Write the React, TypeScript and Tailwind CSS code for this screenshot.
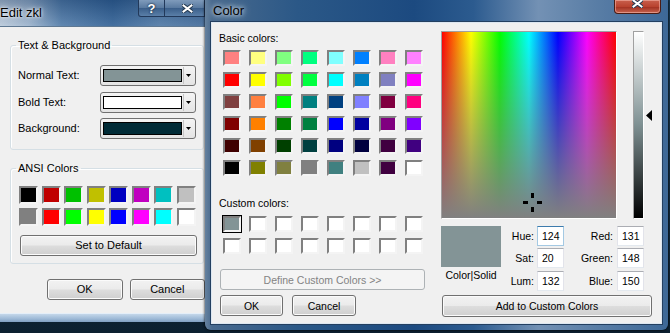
import React from 'react';

const basicColors = [
  'bg-[#ff8080]', 'bg-[#ffff80]', 'bg-[#80ff80]', 'bg-[#00ff80]', 'bg-[#80ffff]', 'bg-[#0080ff]', 'bg-[#ff80c0]', 'bg-[#ff80ff]',
  'bg-[#ff0000]', 'bg-[#ffff00]', 'bg-[#80ff00]', 'bg-[#00ff40]', 'bg-[#00ffff]', 'bg-[#0080c0]', 'bg-[#8080c0]', 'bg-[#ff00ff]',
  'bg-[#804040]', 'bg-[#ff8040]', 'bg-[#00ff00]', 'bg-[#008080]', 'bg-[#004080]', 'bg-[#8080ff]', 'bg-[#800040]', 'bg-[#ff0080]',
  'bg-[#800000]', 'bg-[#ff8000]', 'bg-[#008000]', 'bg-[#008040]', 'bg-[#0000ff]', 'bg-[#0000a0]', 'bg-[#800080]', 'bg-[#8000ff]',
  'bg-[#400000]', 'bg-[#804000]', 'bg-[#004000]', 'bg-[#004040]', 'bg-[#000080]', 'bg-[#000040]', 'bg-[#400040]', 'bg-[#400080]',
  'bg-[#000000]', 'bg-[#808000]', 'bg-[#808040]', 'bg-[#808080]', 'bg-[#408080]', 'bg-[#c0c0c0]', 'bg-[#400040]', 'bg-[#ffffff]',
];

const ansiColors = [
  'bg-[#000000]', 'bg-[#c00000]', 'bg-[#00c000]', 'bg-[#c0c000]', 'bg-[#0000c0]', 'bg-[#c000c0]', 'bg-[#00c0c0]', 'bg-[#c0c0c0]',
  'bg-[#808080]', 'bg-[#ff0000]', 'bg-[#00ff00]', 'bg-[#ffff00]', 'bg-[#0000ff]', 'bg-[#ff00ff]', 'bg-[#00ffff]', 'bg-[#ffffff]',
];

const buttonCls =
  'flex items-center justify-center rounded-[3px] border border-[#707070] bg-[linear-gradient(to_bottom,#f2f2f2_0%,#ebebeb_48%,#dddddd_52%,#cfcfcf_100%)] shadow-[inset_0_0_0_1px_#fbfbfb] text-black';

function Button({ children, className = '' }: { children: React.ReactNode; className?: string }) {
  return <div className={`${buttonCls} ${className}`}>{children}</div>;
}

// sunken colour well, classic 3D look
function Well({ color, className = '' }: { color: string; className?: string }) {
  return (
    <div
      className={`border-2 border-t-[#808080] border-l-[#808080] border-r-[#f4f4f4] border-b-[#f4f4f4] ${color} ${className}`}
    />
  );
}

function Combo({ color }: { color: string }) {
  return (
    <div className="flex h-[21px] w-[96px] items-center rounded-[3px] border border-[#707070] bg-[linear-gradient(to_bottom,#f4f4f4,#e4e4e4)] pl-[2px]">
      <div className={`h-[13px] w-[79px] border border-black ${color}`} />
      <div className="ml-[1px] h-[17px] w-px bg-[#c4c4c4]" />
      <svg width="5" height="3" className="ml-[2px]">
        <path d="M0 0h5L2.5 3z" fill="#000" />
      </svg>
    </div>
  );
}

function Field({ value, focus = false }: { value: string; focus?: boolean }) {
  return (
    <div
      className={`flex h-[20px] w-[27px] items-center border bg-white pl-[4px] text-[10.5px] ${
        focus
          ? 'border-[#a4c9e3] border-t-[#3d7bad]'
          : 'border-[#e2e3ea] border-t-[#abadb3] border-b-[#e3e9ef]'
      }`}
    >
      {value}
    </div>
  );
}

function Group({ title, children, className = '' }: { title: string; children: React.ReactNode; className?: string }) {
  return (
    <fieldset
      className={`ml-[10px] w-[194px] rounded-[3px] border border-[#d5dfe5] pl-[8px] shadow-[inset_1px_1px_0_#ffffff] ${className}`}
    >
      <legend className="-ml-[3px] px-[2px] leading-[14px]">{title}</legend>
      {children}
    </fieldset>
  );
}

function CloseGlyph() {
  return (
    <svg width="11" height="9" viewBox="0 0 11 9">
      <path d="M1.5 1.5L9.5 7.5M9.5 1.5L1.5 7.5" stroke="#23384f" strokeWidth="4" strokeLinecap="square" />
      <path d="M1.5 1.5L9.5 7.5M9.5 1.5L1.5 7.5" stroke="#ffffff" strokeWidth="2" strokeLinecap="square" />
    </svg>
  );
}

function EditWindow() {
  const rows: [string, string][] = [
    ['Normal Text:', 'bg-[#839496]'],
    ['Bold Text:', 'bg-[#ffffff]'],
    ['Background:', 'bg-[#002b36]'],
  ];
  return (
    <div className="flex h-[322px] w-[205px] shrink-0 flex-col overflow-hidden">
      {/* title bar */}
      <div className="flex h-[27px] shrink-0 items-start border-b border-[#5e7892] bg-[linear-gradient(to_bottom,rgba(20,50,90,0.35),rgba(255,255,255,0.1)),linear-gradient(to_right,#b9c9da_0%,#9ab2cc_14%,#4f7aa8_30%,#2f5f94_55%,#4d77a4_78%,#3e6898_100%)]">
        <div className="flex-1 pt-[5px] text-[13px] leading-[16px] text-black [text-shadow:0_0_6px_#ffffff,0_0_3px_#ffffff]">
          Edit zkl
        </div>
        <div className="flex h-[17px] w-[27px] items-center justify-center rounded-bl-[3px] border border-t-0 border-[#22395a] bg-[linear-gradient(to_bottom,#7f9bbb,#58799f_50%,#3b5f8a_52%,#5a7fa8)] text-[13px] font-bold leading-none text-white [text-shadow:0_0_2px_#1c2f45,0_0_2px_#1c2f45]">
          ?
        </div>
        <div className="flex h-[17px] w-[40px] shrink-0 items-center justify-start border border-t-0 border-l-0 border-[#22395a] bg-[linear-gradient(to_bottom,#7f9bbb,#58799f_50%,#3b5f8a_52%,#5a7fa8)] pl-[17px]">
          <CloseGlyph />
        </div>
      </div>

      {/* client */}
      <div className="flex h-[286px] shrink-0 flex-col bg-[#f0f0f0] text-[11px]">
        <Group title="Text & Background" className="mt-[11px]">
          <div className="flex flex-col gap-[5.5px] pb-[10px] pt-[13px]">
            {rows.map(([label, color]) => (
              <div key={label} className="flex h-[21px] items-center">
                <span className="-ml-[1px] w-[82px]">{label}</span>
                <Combo color={color} />
              </div>
            ))}
          </div>
        </Group>

        <Group title="ANSI Colors" className="mt-[11px]">
          <div className="pb-[7px] pt-[11px]">
            <div className="grid w-[177px] grid-cols-[repeat(8,19px)] justify-between gap-y-[4px]">
              {ansiColors.map((c, i) => (
                <Well key={i} color={c} className="h-[18px] w-[19px]" />
              ))}
            </div>
            <Button className="ml-[1px] mt-[9px] h-[21px] w-[177px]">Set to Default</Button>
          </div>
        </Group>

        <div className="ml-[47px] mt-[15px] flex gap-[7px]">
          <Button className="h-[21px] w-[76px]">OK</Button>
          <Button className="h-[21px] w-[76px]">Cancel</Button>
        </div>
      </div>

      {/* bottom frame */}
      <div className="h-[9px] shrink-0 border-t border-[#e4eef8] bg-[linear-gradient(to_bottom,#c4d7ea,#9db9d6_60%,#7f9fc2)]" />
    </div>
  );
}

function ColorWindow() {
  return (
    <div className="flex h-[330px] w-[463px] shrink-0 flex-col rounded-b-[6px] bg-[linear-gradient(to_right,#66829f_0px,#48698d_7px,#2b5887_20%,#1c4a80_45%,#2c5b8f_58%,#7391b4_72%,#5a7ea6_84%,#3d6897_100%)] shadow-[0_0_3px_#000000]">
      {/* title bar */}
      <div className="flex h-[22px] shrink-0 items-start">
        <div className="pl-[8px] pt-[3px] text-[13px] leading-[16px] text-black [text-shadow:0_0_8px_#e8f0f8,0_0_4px_#e8f0f8]">
          Color
        </div>
        <div className="ml-auto mr-[7px] flex h-[14px] w-[47px] items-start justify-center rounded-b-[4px] border border-t-0 border-[#4b1c14] bg-[linear-gradient(to_bottom,#c9604d,#b9432f_50%,#a33222_55%,#c6644e)] shadow-[inset_0_0_0_1px_rgba(255,200,190,0.5)]">
          <div className="-mt-[1px]">
            <CloseGlyph />
          </div>
        </div>
      </div>

      {/* client */}
      <div className="mx-[6px] mb-[6px] flex flex-1 border border-[#dde7f1] bg-[#f0f0f0] pl-[7px] pt-[8px] text-[10.5px] leading-[14px] shadow-[0_0_0_1px_#233f60]">
        {/* left column */}
        <div className="flex w-[207px] shrink-0 flex-col">
          <div className="h-[14px]">Basic colors:</div>
          <div className="ml-[4px] mt-[5px] grid grid-cols-[repeat(8,18px)] gap-x-[8px] gap-y-[6px]">
            {basicColors.map((c, i) => (
              <Well key={i} color={c} className="h-[16px] w-[18px]" />
            ))}
          </div>
          <div className="mt-[20px] h-[14px]">Custom colors:</div>
          <div className="ml-[4px] mt-[6px] grid grid-cols-[repeat(8,18px)] gap-x-[8px] gap-y-[6px]">
            {Array.from({ length: 16 }).map((_, i) => (
              <Well
                key={i}
                color={i === 0 ? 'bg-[#839496]' : 'bg-white'}
                className={`h-[16px] w-[18px] ${i === 0 ? 'outline outline-1 outline-black' : ''}`}
              />
            ))}
          </div>
          <div className="ml-[1px] mt-[15px] flex h-[21px] w-[205px] items-center justify-center rounded-[3px] border border-[#adb2b5] bg-[#f4f4f4] text-[#838383]">
            Define Custom Colors &gt;&gt;
          </div>
          <div className="ml-[1px] mt-[5px] flex gap-[9px]">
            <Button className="h-[21px] w-[63px]">OK</Button>
            <Button className="h-[21px] w-[64px]">Cancel</Button>
          </div>
        </div>

        {/* right column */}
        <div className="ml-[15px] flex flex-col">
          <div className="flex">
            <div className="relative h-[188px] w-[176px] border border-[#a0a0a0] border-b-white border-r-white bg-[linear-gradient(to_bottom,rgba(128,128,128,0),rgb(128,128,128)),linear-gradient(to_right,#ff0000,#ffff00,#00ff00,#00ffff,#0000ff,#ff00ff,#ff0000)]">
              <svg width="19" height="19" className="absolute left-[81px] top-[161px]">
                <rect x="8" y="0" width="3" height="5" fill="#000" />
                <rect x="8" y="14" width="3" height="5" fill="#000" />
                <rect x="0" y="8" width="5" height="3" fill="#000" />
                <rect x="14" y="8" width="5" height="3" fill="#000" />
              </svg>
            </div>
            <div className="relative ml-[16px]">
              <div className="h-[188px] w-[11px] border border-[#a0a0a0] border-b-white border-r-white bg-[linear-gradient(to_bottom,#ffffff,#7e9092_50%,#000000)]" />
              <svg width="6" height="11" className="absolute left-[13px] top-[79px]">
                <path d="M0 5.5L6 0V11z" fill="#000" />
              </svg>
            </div>
          </div>

          <div className="mt-[7px] flex">
            <div className="flex w-[60px] flex-col items-center">
              <div className="h-[41px] w-[60px] bg-[#839496]" />
              <div className="mt-[1px]">Color|Solid</div>
            </div>
            <div className="ml-[3px] flex flex-col">
              <div className="flex items-center gap-[3px]">
                <span className="w-[30px] text-right">Hue:</span>
                <Field value="124" focus />
              </div>
              <div className="mt-[2px] flex items-center gap-[3px]">
                <span className="w-[30px] text-right">Sat:</span>
                <Field value="20" />
              </div>
              <div className="mt-[3px] flex items-center gap-[3px]">
                <span className="w-[30px] text-right">Lum:</span>
                <Field value="132" />
              </div>
            </div>
            <div className="ml-[3px] flex flex-col">
              <div className="flex items-center gap-[4px]">
                <span className="w-[46px] text-right">Red:</span>
                <Field value="131" />
              </div>
              <div className="mt-[2px] flex items-center gap-[4px]">
                <span className="w-[46px] text-right">Green:</span>
                <Field value="148" />
              </div>
              <div className="mt-[3px] flex items-center gap-[4px]">
                <span className="w-[46px] text-right">Blue:</span>
                <Field value="150" />
              </div>
            </div>
          </div>

          <Button className="ml-[1px] mt-[4px] h-[22px] w-[210px]">Add to Custom Colors</Button>
        </div>
      </div>
    </div>
  );
}

export default function App() {
  return (
    <div className="flex h-[333px] w-[670px] overflow-hidden bg-[linear-gradient(to_bottom,#1a3c56,#0c2030)] font-['Liberation_Sans',Arial,sans-serif] text-black">
      <EditWindow />
      <ColorWindow />
    </div>
  );
}
